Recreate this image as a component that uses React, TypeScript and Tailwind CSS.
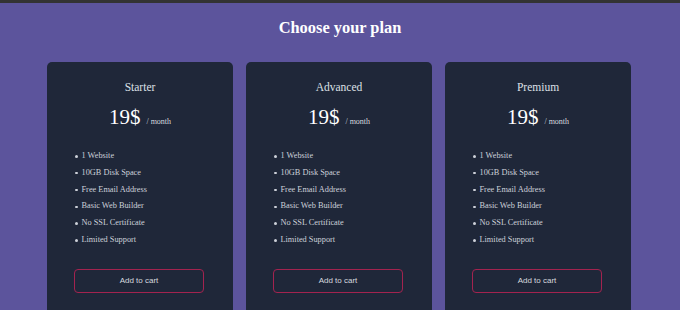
import React from "react";

const plans = ["Starter", "Advanced", "Premium"];
const features = [
  "1 Website",
  "10GB Disk Space",
  "Free Email Address",
  "Basic Web Builder",
  "No SSL Certificate",
  "Limited Support",
];

function Card({ name }: { name: string }) {
  return (
    <div className="w-[186px] shrink-0 rounded-[5px] bg-[#1f2739] pt-[18px] pb-[30px]">
      <div className="text-center text-[11.5px] leading-[14px] text-[#dde0e6]">{name}</div>
      <div className="mt-[11px] flex items-baseline justify-center leading-[24px]">
        <span className="text-[21px] text-white">19$</span>
        <span className="ml-[6px] text-[8px] text-[#d6d9df]">/ month</span>
      </div>
      <ul className="mt-[14px]">
        {features.map((f) => (
          <li key={f} className="flex items-center text-[8.3px] leading-[16.8px] text-[#cdd1d9]">
            <span className="ml-[28px] mr-[4px] h-[2.5px] w-[2.5px] rounded-full bg-[#cdd1d9]" />
            {f}
          </li>
        ))}
      </ul>
      <button className="ml-[27px] mt-[20.5px] flex h-[24px] w-[130px] items-center justify-center rounded-[4px] border border-[#a3234f] font-['Liberation_Sans',sans-serif] text-[8px] text-[#d6d9df]">
        Add to cart
      </button>
    </div>
  );
}

export default function App() {
  return (
    <div className="h-[310px] overflow-hidden border-t-[3px] border-[#333333] bg-[#5c549c] font-['Liberation_Serif',serif]">
      <h1 className="pt-[15px] text-center text-[16.4px] font-bold leading-[20px] text-white">
        Choose your plan
      </h1>
      <div className="mt-[24px] flex gap-[13px] pl-[47px]">
        {plans.map((p) => (
          <Card key={p} name={p} />
        ))}
      </div>
    </div>
  );
}
